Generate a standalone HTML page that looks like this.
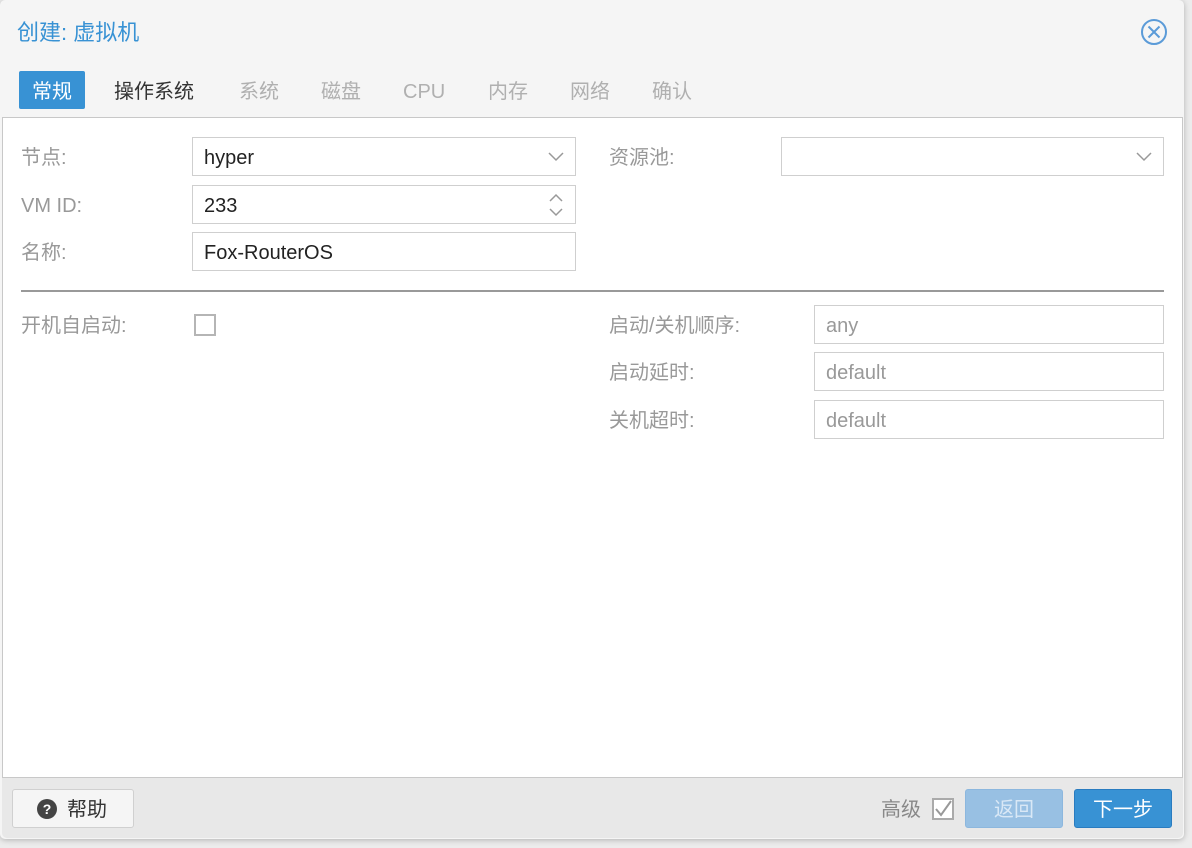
<!DOCTYPE html>
<html><head><meta charset="utf-8"><style>
*{box-sizing:border-box;margin:0;padding:0}
body{width:1192px;height:848px;background:#ececec;font-family:"Liberation Sans","Noto Sans CJK SC",sans-serif;position:relative;overflow:hidden}
.win{position:absolute;left:0;top:0;width:1184px;height:839px;background:#f5f5f5;border-radius:5px;box-shadow:0 1px 6px rgba(0,0,0,.25)}
.title{position:absolute;left:17px;top:15px;font-size:22px;color:#3892d4}
.close{position:absolute;left:1140px;top:18px}
.tabs{position:absolute;left:19px;top:71px;height:38px}
.tab{position:absolute;top:0;height:38px;line-height:42px;font-size:20px;color:#b0b0b0;white-space:nowrap}
.tab.act{background:#3892d4;color:#fff;border-radius:2px;width:66px;text-align:center;left:0}
.body{position:absolute;left:2px;top:117px;width:1181px;height:661px;background:#fff;border:1px solid #c8c8c8}
.lbl{position:absolute;font-size:20px;color:#999;line-height:42px;white-space:nowrap}
.fld{position:absolute;height:39px;border:1px solid #cfcfcf;background:#fff;font-size:20px;line-height:41px;padding-left:11px;color:#222}
.fld.ph{color:#999}
.sep{position:absolute;left:18px;top:172px;width:1143px;height:2px;background:#999}
.cb{position:absolute;width:22px;height:22px;border:2px solid #b5b5b5;background:#fff}
.foot{position:absolute;left:2px;top:778px;width:1181px;height:60px;background:#e8e8e8;border-radius:0 0 5px 5px}
.btn{position:absolute;height:39px;border-radius:3px;font-size:20px;line-height:40px;text-align:center}
</style></head><body>
<div class="win">
<div class="title">创建: 虚拟机</div>
<svg class="close" width="28" height="28" viewBox="0 0 28 28"><circle cx="14" cy="14" r="12" fill="none" stroke="#5b9bd8" stroke-width="2"/><path d="M8.5 8.5L19.5 19.5M19.5 8.5L8.5 19.5" stroke="#5b9bd8" stroke-width="2"/></svg>
<div class="tabs">
<div class="tab act">常规</div>
<div class="tab" style="left:95px;color:#333">操作系统</div>
<div class="tab" style="left:220px">系统</div>
<div class="tab" style="left:302px">磁盘</div>
<div class="tab" style="left:384px">CPU</div>
<div class="tab" style="left:469px">内存</div>
<div class="tab" style="left:551px">网络</div>
<div class="tab" style="left:633px">确认</div>
</div>
<div class="body">
<div class="lbl" style="left:18px;top:19px">节点:</div>
<div class="fld" style="left:189px;top:19px;width:384px">hyper<svg style="position:absolute;right:11px;top:14px" width="16" height="10"><path d="M1 1l7 7 7-7" fill="none" stroke="#999" stroke-width="1.5"/></svg></div>
<div class="lbl" style="left:18px;top:67px">VM ID:</div>
<div class="fld" style="left:189px;top:67px;width:384px">233<svg style="position:absolute;right:11px;top:6px" width="16" height="26"><path d="M2 9l6-6 6 6M2 17l6 6 6-6" fill="none" stroke="#999" stroke-width="1.5"/></svg></div>
<div class="lbl" style="left:18px;top:114px">名称:</div>
<div class="fld" style="left:189px;top:114px;width:384px">Fox-RouterOS</div>
<div class="lbl" style="left:606px;top:19px">资源池:</div>
<div class="fld" style="left:778px;top:19px;width:383px"><svg style="position:absolute;right:11px;top:14px" width="16" height="10"><path d="M1 1l7 7 7-7" fill="none" stroke="#999" stroke-width="1.5"/></svg></div>
<div class="sep"></div>
<div class="lbl" style="left:18px;top:187px">开机自启动:</div>
<div class="cb" style="left:191px;top:196px"></div>
<div class="lbl" style="left:606px;top:187px">启动/关机顺序:</div>
<div class="fld ph" style="left:811px;top:187px;width:350px">any</div>
<div class="lbl" style="left:606px;top:234px">启动延时:</div>
<div class="fld ph" style="left:811px;top:234px;width:350px">default</div>
<div class="lbl" style="left:606px;top:282px">关机超时:</div>
<div class="fld ph" style="left:811px;top:282px;width:350px">default</div>
</div>
<div class="foot">
<div class="btn" style="left:10px;top:11px;width:122px;background:#f5f5f5;border:1px solid #d0d0d0;color:#333;text-align:left;padding-left:24px"><svg style="position:absolute;left:24px;top:9px" width="20" height="20"><circle cx="10" cy="10" r="10" fill="#444"/><text x="10" y="15" font-size="14" font-weight="bold" fill="#fff" text-anchor="middle" font-family="Liberation Sans">?</text></svg><span style="margin-left:30px">帮助</span></div>
<div style="position:absolute;left:879px;top:12px;font-size:20px;line-height:40px;color:#888">高级</div>
<svg style="position:absolute;left:930px;top:20px" width="22" height="22"><rect x="1" y="1" width="20" height="20" fill="#fff" stroke="#aaa" stroke-width="2"/><path d="M4 11l5 6 10-14" fill="none" stroke="#999" stroke-width="2"/></svg>
<div class="btn" style="left:963px;top:11px;width:98px;background:#98c0e3;border:1px solid #8cb7de;color:#d9e8f6">返回</div>
<div class="btn" style="left:1072px;top:11px;width:98px;background:#3892d4;border:1px solid #2a7cc0;color:#fff">下一步</div>
</div>
</div>
</body></html>
